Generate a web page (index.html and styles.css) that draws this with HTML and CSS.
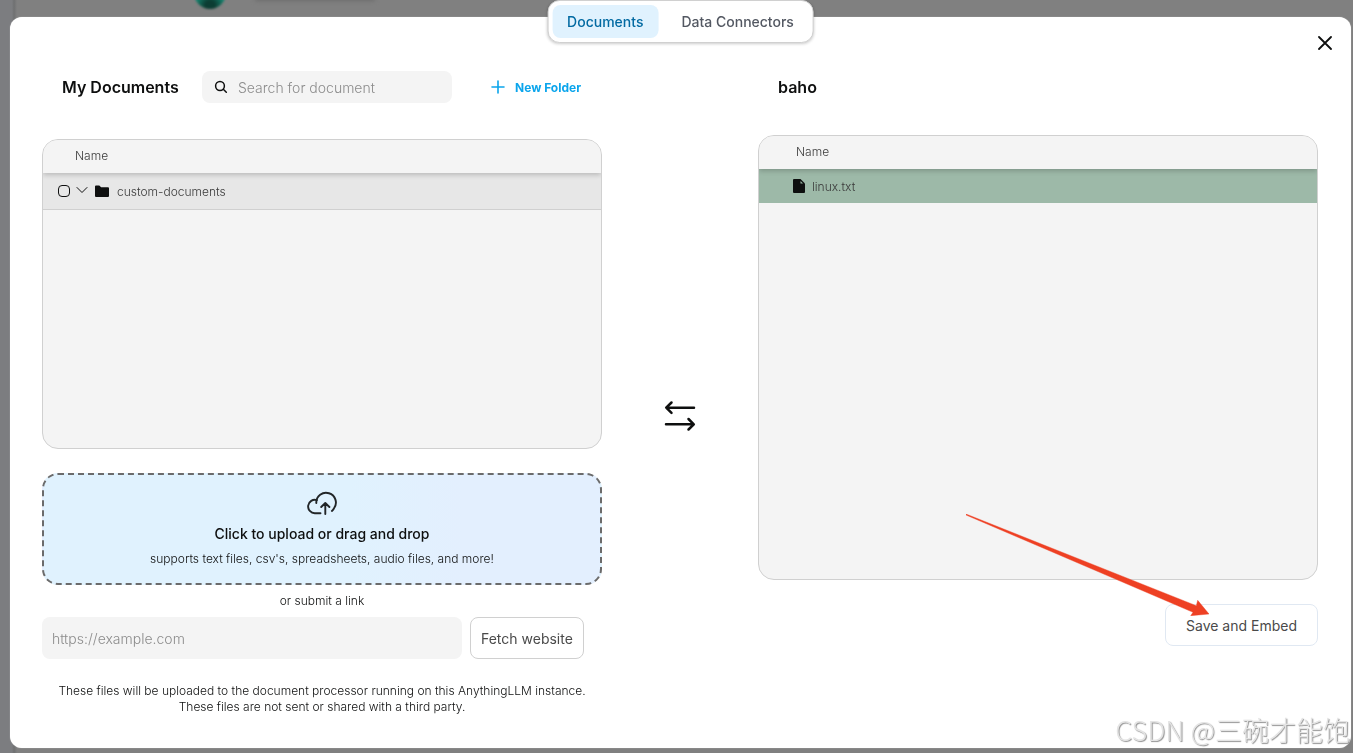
FILE: index.html
```html
<!DOCTYPE html>
<html lang="en">

<head>
  <meta charset="UTF-8">
  <meta name="viewport" content="width=device-width, initial-scale=1.0">
  <title>Documents</title>
  <link rel="stylesheet" href="styles.css">
</head>

<body>
  <!-- dimmed workspace behind the modal -->
  <div class="backdrop">
    <div class="avatar"></div>
    <div class="message"></div>
  </div>

  <main class="modal">
    <nav class="tabs">
      <button type="button" class="tab active">Documents</button>
      <button type="button" class="tab">Data Connectors</button>
    </nav>
    <button type="button" class="close" aria-label="Close">
      <svg width="14" height="14" viewBox="0 0 14 14"><path d="M1 1l12 12M13 1L1 13" fill="none" stroke="#0e0f0f" stroke-width="1.8" stroke-linecap="round"/></svg>
    </button>

    <div class="columns">
      <section class="left">
        <div class="left-header">
          <h3>My Documents</h3>
          <label class="search">
            <svg width="14" height="14" viewBox="0 0 14 14"><g fill="none" stroke="#0e0f0f" stroke-width="1.5" stroke-linecap="round"><circle cx="6" cy="6" r="4.4"/><path d="M9.300 9.300l3 3"/></g></svg>
            <input type="search" placeholder="Search for document" aria-label="Search for document">
          </label>
          <button type="button" class="new-folder">
            <svg width="14" height="14" viewBox="0 0 14 14"><path d="M7 1v12M1 7h12" fill="none" stroke="#0ba5ec" stroke-width="1.6" stroke-linecap="round"/></svg>
            New Folder
          </button>
        </div>

        <div class="panel documents">
          <table>
            <thead>
              <tr><th>Name</th></tr>
            </thead>
            <tbody>
              <tr class="folder">
                <td>
                  <div class="cell">
                    <input type="checkbox" id="custom" class="check">
                    <svg class="caret" width="12" height="10" viewBox="0 0 12 10"><path d="M1 1.500l5 5 5-5" fill="none" stroke="#0e0f0f" stroke-width="1" stroke-linecap="round" stroke-linejoin="round"/></svg>
                    <svg class="folder-icon" width="14" height="12" viewBox="0 0 14 12"><path d="M0 1.500Q0 .5 1 .5h3.300l1.800 1.800H13q1 0 1 1V11q0 1-1 1H1q-1 0-1-1z" fill="#0e0f0f"/></svg>
                    <label for="custom">custom-documents</label>
                  </div>
                </td>
              </tr>
            </tbody>
          </table>
        </div>

        <button type="button" class="dropzone">
          <svg width="32" height="26" viewBox="0 0 32 26"><g fill="none" stroke="#222628" stroke-width="1.9" stroke-linecap="round" stroke-linejoin="round"><path d="M14.500 23.200H9a6.700 6.700 0 1 1 1.800-13.100"/><path d="M10.300 13a9.800 9.800 0 1 1 17.600 5.500q-.8 1.500-2 2.500"/><path d="M19.300 24V13.500M15.200 17l4.100-4 4.100 4"/></g></svg>
          <span class="drop-title">Click to upload or drag and drop</span>
          <span class="drop-hint">supports text files, csv's, spreadsheets, audio files, and more!</span>
        </button>

        <label for="link" class="or-link">or submit a link</label>
        <form class="link-form">
          <input type="url" id="link" placeholder="https://example.com">
          <button type="button">Fetch website</button>
        </form>
        <p class="notice">These files will be uploaded to the document processor running on this AnythingLLM instance.<br>These files are not sent or shared with a third party.</p>
      </section>

      <div class="swap">
        <svg width="32" height="32" viewBox="0 0 32 32"><path d="M30 7.700H2.500M7.500 2.500L2.200 7.700l5.300 5.200M2 24.300h27.500M24.500 19l5.300 5.300-5.300 5.200" fill="none" stroke="#0e0f0f" stroke-width="2.500" stroke-linecap="round" stroke-linejoin="round"/></svg>
      </div>

      <section class="right">
        <h3>baho</h3>
        <div class="panel workspace">
          <table>
            <thead>
              <tr><th>Name</th></tr>
            </thead>
            <tbody>
              <tr class="file">
                <td>
                  <div class="cell">
                    <svg width="12" height="14" viewBox="0 0 12 14"><path d="M1 0h6.500L12 4.500V13q0 1-1 1H1q-1 0-1-1V1q0-1 1-1z" fill="#0e0f0f"/><path d="M7.500 2v2.500H10z" fill="#9db9a8"/></svg>
                    <span>linux.txt</span>
                  </div>
                </td>
              </tr>
            </tbody>
          </table>
        </div>
        <button type="button" class="save">Save and Embed</button>
        <svg class="pointer" width="243" height="102" viewBox="0 0 243 102"><path d="M0 0L230.300 91.700 231.700 86.300 243 100 224.700 101.700 227 98.300 0 1z" fill="#ee4023" stroke="#ee4023" stroke-width=".4"/></svg>
      </section>
    </div>
  </main>

  <div class="watermark">CSDN @三碗才能饱</div>
</body>

</html>
```

FILE: styles.css
```css
* {
  box-sizing: border-box;
}

body {
  margin: 0;
  min-height: 100vh;
  padding: 17px 2px 5px 10px;
  background: #808080;
  color: #0e0f0f;
  font-family: Inter, "Noto Sans CJK SC", sans-serif;
  font-size: 14px;
}

button, input {
  font: inherit;
  color: inherit;
}

button {
  cursor: pointer;
}

svg {
  display: block;
  flex: none;
}

h3 {
  margin: 0;
  font-size: 16px;
  line-height: 32px;
  font-weight: 600;
}

.backdrop {
  position: fixed;
  inset: 0;
  overflow: hidden;
  background: linear-gradient(to right, #7c7d80 12px, #6f7071 14px, #808080 17px);
}

.avatar {
  position: absolute;
  left: 194px;
  top: -23px;
  width: 32px;
  height: 32px;
  border-radius: 50%;
  background: radial-gradient(circle at 50% 90%, #0c3d33 15%, #168570 45%);
  filter: blur(1px);
}

.message {
  position: absolute;
  left: 255px;
  top: -4px;
  width: 120px;
  height: 5px;
  background: #6c6c6c;
  filter: blur(2px);
}

.modal {
  position: relative;
  min-height: calc(100vh - 22px);
  padding: 54px 33px 32px 32px;
  background: #fff;
  border-radius: 12px;
  box-shadow: 0 0 1px #d0d0d0;
}

/* tabs */

.tabs {
  position: absolute;
  top: -17px;
  left: 50%;
  transform: translateX(-50%);
  display: flex;
  gap: 8px;
  padding: 4px;
  background: #fff;
  border: 1px solid #d0d0d0;
  border-radius: 12px;
  box-shadow: 0 1px 3px rgba(0, 0, 0, 0.2);
}

.tab {
  height: 33px;
  padding: 0 15px;
  border: 0;
  border-radius: 8px;
  background: none;
  color: #535862;
  font-weight: 500;
  white-space: nowrap;
}

.tab.active {
  background: #e0f2fe;
  color: #026aa2;
}

.close {
  position: absolute;
  top: 14px;
  right: 14px;
  padding: 5px;
  border: 0;
  background: none;
}

/* two lists with the arrows between them */

.columns {
  display: grid;
  grid-template-columns: 1fr 156px 1fr;
}

.left {
  display: flex;
  flex-direction: column;
}

.left-header {
  display: flex;
  align-items: center;
  padding-left: 20px;
  margin-bottom: 36px;
}

.left-header h3 {
  width: 140px;
}

.search {
  display: flex;
  align-items: center;
  gap: 10px;
  width: 250px;
  height: 32px;
  padding: 0 12px;
  border-radius: 8px;
  background: #f4f4f4;
}

.search input {
  flex: 1;
  min-width: 0;
  padding: 0;
  border: 0;
  outline: 0;
  background: none;
}

input::placeholder {
  color: #8c8c8c;
  font-weight: 300;
}

.new-folder {
  display: flex;
  align-items: center;
  gap: 10px;
  margin-left: 39px;
  padding: 0;
  border: 0;
  background: none;
  color: #0ba5ec;
  font-size: 12px;
  font-weight: 700;
}

.panel {
  overflow: hidden;
  background: #f4f4f4;
  border: 1px solid #d0d0d0;
  border-radius: 16px;
}

.documents {
  height: 310px;
}

.workspace {
  height: 445px;
}

.panel table {
  width: 100%;
  border-collapse: separate;
  border-spacing: 0;
  font-size: 12px;
  color: #3a3a3a;
}

.panel th {
  position: relative;
  height: 33px;
  padding: 0 32px 2px;
  background: #f4f4f4;
  box-shadow: 0 2px 5px rgba(0, 0, 0, 0.2);
  text-align: left;
  font-weight: 300;
}

.panel td {
  padding: 0;
  font-weight: 300;
}

.workspace th {
  padding: 0 37px 2px;
}

.cell {
  display: flex;
  align-items: center;
}

.folder .cell {
  height: 37px;
  padding-left: 15px;
  background: #e7e7e7;
  border-bottom: 1px solid #d0d0d0;
}

.check {
  appearance: none;
  width: 12px;
  height: 12px;
  margin: 0;
  border: 1px solid #0e0f0f;
  border-radius: 4px;
}

.caret {
  margin: 0 7px 0 6px;
}

.folder-icon {
  margin-right: 8px;
}

.file .cell {
  gap: 7px;
  height: 34px;
  padding-left: 34px;
  background: #9db9a8;
}

/* upload */

.dropzone {
  display: flex;
  flex-direction: column;
  align-items: center;
  height: 112px;
  margin-top: 24px;
  padding: 15px 0 0;
  border: 2px dashed #6b6b6b;
  border-radius: 16px;
  background: linear-gradient(to right, #e0f2fe 55%, #e3effe 75%);
}

.drop-title {
  margin-top: 8px;
  line-height: 20px;
  font-weight: 500;
}

.drop-hint {
  margin-top: 7px;
  font-size: 12px;
  line-height: 16px;
  font-weight: 300;
}

.or-link {
  margin: 8px 0;
  text-align: center;
  font-size: 12px;
  line-height: 16px;
  font-weight: 300;
}

.link-form {
  display: flex;
  gap: 8px;
}

.link-form input {
  width: 75%;
  height: 42px;
  padding: 0 10px;
  border: 0;
  border-radius: 8px;
  background: #f4f4f4;
}

.link-form button,
.save {
  height: 42px;
  padding: 0 10px;
  border: 1px solid #d0d0d0;
  border-radius: 8px;
  background: #fff;
  color: #4a4a4a;
  white-space: nowrap;
}

.notice {
  margin: 24px 0 0;
  text-align: center;
  font-size: 12px;
  line-height: 16px;
  font-weight: 300;
}

.swap {
  display: flex;
  justify-content: center;
  padding-top: 329px;
}

/* workspace */

.right {
  position: relative;
  display: flex;
  flex-direction: column;
}

.right h3 {
  padding-left: 20px;
  margin-bottom: 32px;
}

.save {
  align-self: flex-end;
  margin-top: 24px;
  padding: 0 20px;
  border-color: #e0e8f2;
}

.pointer {
  position: absolute;
  top: 443px;
  right: 109px;
}

.watermark {
  position: fixed;
  right: 3px;
  bottom: 3px;
  color: #e4e4e4;
  font-family: "Noto Sans CJK SC", sans-serif;
  font-size: 27px;
  font-weight: 300;
  line-height: 40px;
  text-shadow: 1px 1px 1px #909090;
}
```
